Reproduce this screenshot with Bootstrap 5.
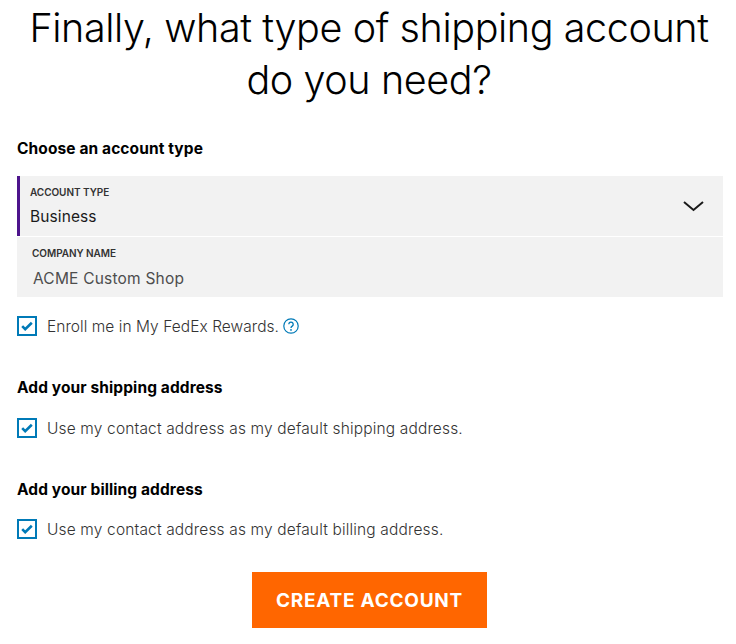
<!DOCTYPE html>
<html lang="en">
<head>
<meta charset="utf-8">
<title>Create account</title>
<link href="https://cdn.jsdelivr.net/npm/bootstrap@5.3.0/dist/css/bootstrap.min.css" rel="stylesheet">
<style>
html,body{height:100%;overflow:hidden}
body{font-family:"Inter","Noto Sans",sans-serif;background:#fff;color:#333}
.shell{width:706px;margin-left:17px}
.headline{font-family:"Inter",sans-serif;font-weight:300;font-size:39.5px;line-height:52px;color:#000;text-align:center;margin:0;padding:2px 2px 0 0;letter-spacing:-.4px}
.sect{font-family:"Inter",sans-serif;font-weight:700;font-size:15.5px;line-height:20px;color:#000;margin:0;letter-spacing:.1px}
.field{background:#f2f2f2;height:60px;position:relative}
.field-acct{border-left:3px solid #4d148c;padding:9px 0 0 10px;margin-bottom:1px}
.field-comp{padding:9px 0 0 15px}
.flabel{font-size:10px;line-height:14px;font-weight:600;color:#333;text-transform:uppercase;display:block;letter-spacing:-.05px}
.fval{font-size:15.5px;line-height:20px;display:block;margin-top:8px;letter-spacing:.1px;color:#1a1a1a}
.field-comp .fval{margin-top:9px;padding-left:1px;color:#4d4d4d;letter-spacing:.2px}
.caret-ico{position:absolute;right:19px;top:24px;width:21px;height:12px}
.tick-row{display:flex;align-items:flex-start;gap:10px}
.tick{width:20px;height:20px;border:2px solid #007ab7;flex:none;display:flex;align-items:center;justify-content:center;background:#fff}
.tick-label{font-size:15.5px;line-height:20px;font-weight:300;color:#333;margin:0;padding-top:1px;letter-spacing:.155px}
.tick-label-short{letter-spacing:.05px}
.help-ico{margin-left:4px;margin-top:-2px}
.cta{background:#f60;color:#fff;font-weight:700;font-size:19px;letter-spacing:.75px;width:235px;height:56px;border:0;border-radius:0;text-transform:uppercase;padding:2px 0 0}
.cta:hover{background:#f60;color:#fff}
.sec-top{margin-top:33px}
.fields{margin-top:17px}
.rewards{margin-top:19px}
.ship-h{margin-top:41px}
.ship-row{margin-top:20px}
.bill-h{margin-top:41px}
.bill-row{margin-top:19px}
.cta-row{margin-top:32px;padding-right:1px}
</style>
</head>
<body>
<main class="shell">
  <h1 class="headline">Finally, what type of shipping account do you need?</h1>
  <h2 class="sect sec-top">Choose an account type</h2>
  <div class="fields">
    <div class="field field-acct">
      <span class="flabel">Account type</span>
      <span class="fval">Business</span>
      <svg class="caret-ico" viewBox="0 0 21 12" aria-hidden="true"><path d="M1 2l9.5 8L20 2" fill="none" stroke="#1a1a1a" stroke-width="2"/></svg>
    </div>
    <div class="field field-comp">
      <span class="flabel">Company name</span>
      <span class="fval">ACME Custom Shop</span>
    </div>
  </div>
  <div class="tick-row rewards">
    <span class="tick"><svg width="12" height="10" viewBox="0 0 12 10" aria-hidden="true"><path d="M1.2 5.2l3 3L10.8 1.8" fill="none" stroke="#007ab7" stroke-width="2.6"/></svg></span>
    <p class="tick-label tick-label-short d-flex align-items-center">Enroll me in My FedEx Rewards.<svg class="help-ico" width="16" height="16" viewBox="0 0 16 16" aria-hidden="true"><circle cx="8" cy="8" r="7.2" fill="none" stroke="#007ab7" stroke-width="1.2"/><path d="M5.8 6.2a2.2 2.2 0 1 1 3.4 1.9c-.8.5-1.2.9-1.2 1.8" fill="none" stroke="#007ab7" stroke-width="1.3"/><circle cx="8" cy="11.9" r=".9" fill="#007ab7"/></svg></p>
  </div>
  <h2 class="sect ship-h">Add your shipping address</h2>
  <div class="tick-row ship-row">
    <span class="tick"><svg width="12" height="10" viewBox="0 0 12 10" aria-hidden="true"><path d="M1.2 5.2l3 3L10.8 1.8" fill="none" stroke="#007ab7" stroke-width="2.6"/></svg></span>
    <p class="tick-label">Use my contact address as my default shipping address.</p>
  </div>
  <h2 class="sect bill-h">Add your billing address</h2>
  <div class="tick-row bill-row">
    <span class="tick"><svg width="12" height="10" viewBox="0 0 12 10" aria-hidden="true"><path d="M1.2 5.2l3 3L10.8 1.8" fill="none" stroke="#007ab7" stroke-width="2.6"/></svg></span>
    <p class="tick-label">Use my contact address as my default billing address.</p>
  </div>
  <div class="d-flex justify-content-center cta-row">
    <button type="button" class="btn cta">Create account</button>
  </div>
</main>
<script src="https://cdn.jsdelivr.net/npm/bootstrap@5.3.0/dist/js/bootstrap.bundle.min.js"></script>
</body>
</html>
